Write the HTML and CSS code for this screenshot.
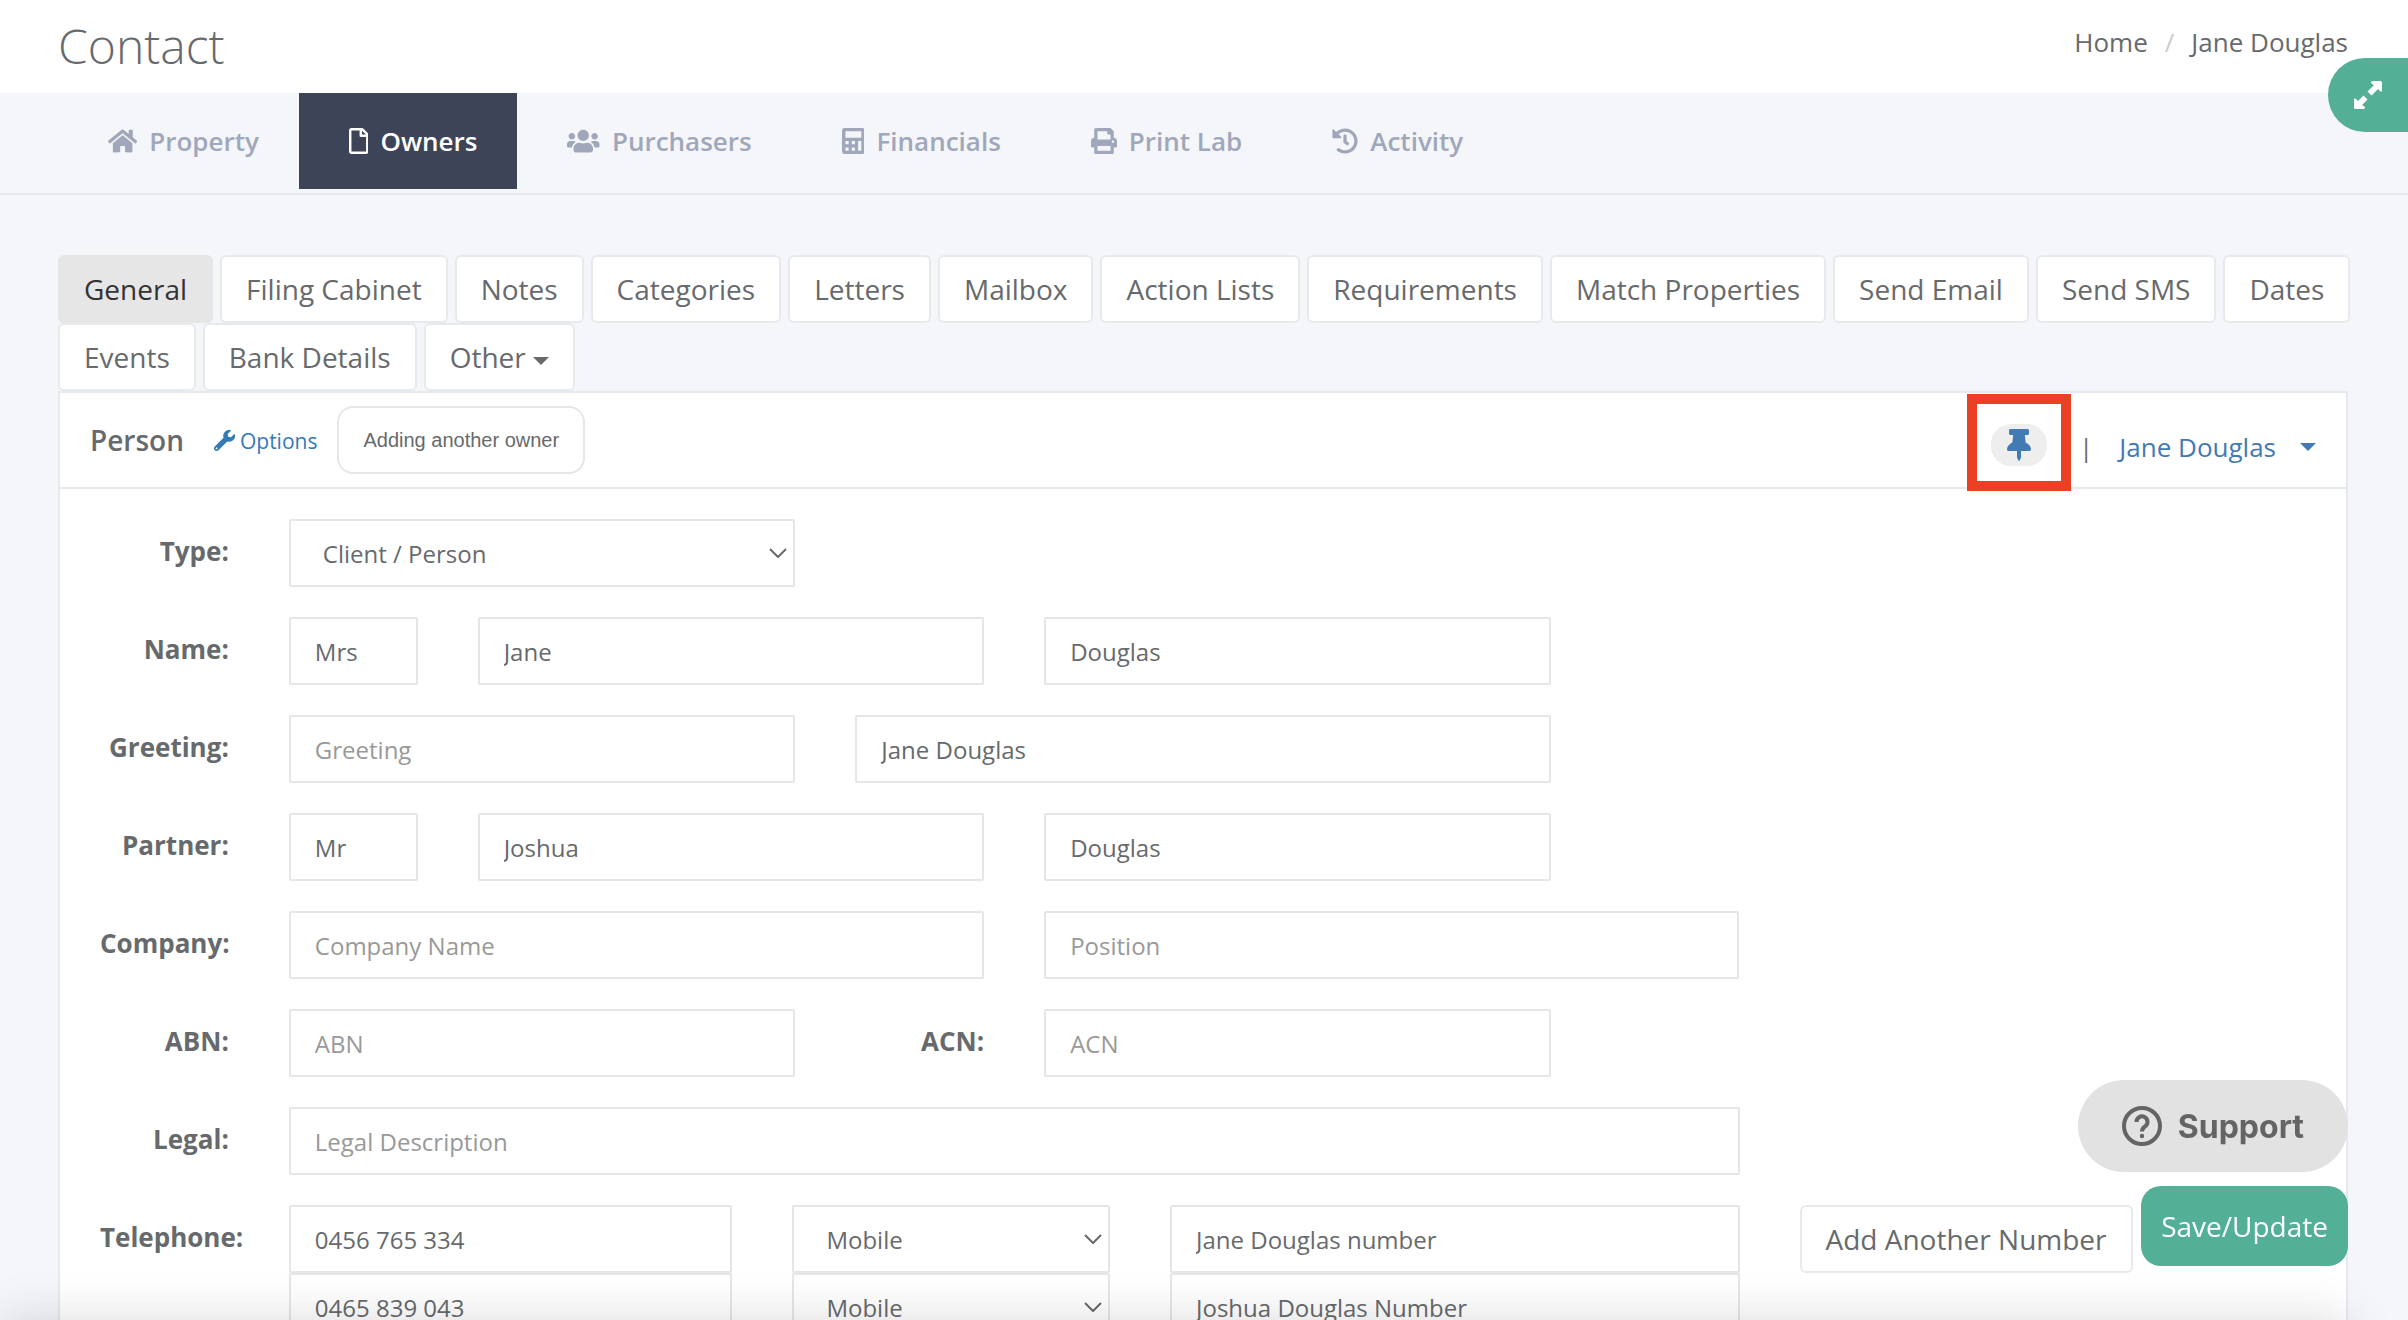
FILE: index.html
```html
<!DOCTYPE html>
<html lang="en">
<head>
    <meta charset="UTF-8">
    <meta name="viewport" content="width=device-width, initial-scale=1.0">
    <title>Contact - Jane Douglas</title>
    <link rel="stylesheet" href="styles.css">
</head>
<body>
    <header class="page-heading">
        <h1>Contact</h1>
        <nav class="breadcrumb">
            <a href="#">Home</a>
            <span class="divider">/</span>
            <a href="#">Jane Douglas</a>
        </nav>
    </header>

    <nav class="main-nav">
        <a href="#" class="nav-item">
            <svg class="icon" viewBox="0 0 576 512"><path d="M280.37 148.26L96 300.11V464a16 16 0 0 0 16 16l112.06-.29a16 16 0 0 0 15.92-16V368a16 16 0 0 1 16-16h64a16 16 0 0 1 16 16v95.64a16 16 0 0 0 16 16.05L464 480a16 16 0 0 0 16-16V300L295.67 148.26a12.19 12.19 0 0 0-15.3 0zM571.6 251.47L488 182.56V44.05a12 12 0 0 0-12-12h-56a12 12 0 0 0-12 12v72.61L318.47 43a48 48 0 0 0-61 0L4.34 251.47a12 12 0 0 0-1.6 16.9l25.5 31A12 12 0 0 0 45.15 301l235.22-193.74a12.19 12.19 0 0 1 15.3 0L530.9 301a12 12 0 0 0 16.9-1.6l25.5-31a12 12 0 0 0-1.7-16.93z"/></svg>
            Property
        </a>
        <a href="#" class="nav-item active">
            <svg class="icon" viewBox="0 0 384 512"><path d="M369.9 97.9L286 14C277 5 264.8 0 252.1 0H48C21.5 0 0 21.5 0 48v416c0 26.5 21.5 48 48 48h288c26.5 0 48-21.5 48-48V131.9c0-12.7-5.1-25-14.1-34zM332.1 128H256V51.9l76.1 76.1zM48 464V48h160v104c0 13.3 10.7 24 24 24h104v288H48z"/></svg>
            Owners
        </a>
        <a href="#" class="nav-item">
            <svg class="icon" viewBox="0 0 640 512"><path d="M96 224c35.3 0 64-28.7 64-64s-28.7-64-64-64-64 28.7-64 64 28.7 64 64 64zm448 0c35.3 0 64-28.7 64-64s-28.7-64-64-64-64 28.7-64 64 28.7 64 64 64zm32 32h-64c-17.6 0-33.5 7.1-45.1 18.6 40.3 22.1 68.9 62 75.1 109.4h66c17.7 0 32-14.3 32-32v-32c0-35.3-28.7-64-64-64zm-256 0c61.9 0 112-50.1 112-112S381.9 32 320 32 208 82.1 208 144s50.1 112 112 112zm76.8 32h-8.3c-20.8 10-43.9 16-68.5 16s-47.6-6-68.5-16h-8.3C179.6 288 128 339.6 128 403.2V432c0 26.5 21.5 48 48 48h288c26.5 0 48-21.5 48-48v-28.8c0-63.6-51.6-115.2-115.2-115.2zm-223.7-13.4C161.5 263.1 145.6 256 128 256H64c-35.3 0-64 28.7-64 64v32c0 17.7 14.3 32 32 32h65.9c6.3-47.4 34.9-87.3 75.2-109.4z"/></svg>
            Purchasers
        </a>
        <a href="#" class="nav-item">
            <svg class="icon" viewBox="0 0 448 512"><path fill-rule="evenodd" d="M48 0h352a48 48 0 0 1 48 48v416a48 48 0 0 1-48 48H48a48 48 0 0 1-48-48V48A48 48 0 0 1 48 0zM68 64v130h312V64zM68 258v62h62v-62zM193 258v62h62v-62zM68 386v62h62v-62zM193 386v62h62v-62zM318 258v190h62V258z"/></svg>
            Financials
        </a>
        <a href="#" class="nav-item">
            <svg class="icon" viewBox="0 0 512 512"><path d="M448 192V77.25c0-8.49-3.37-16.62-9.37-22.63L393.37 9.37c-6-6-14.14-9.37-22.63-9.37H96C78.33 0 64 14.33 64 32v160c-35.35 0-64 28.65-64 64v112c0 8.84 7.16 16 16 16h48v96c0 17.67 14.33 32 32 32h320c17.67 0 32-14.33 32-32v-96h48c8.84 0 16-7.16 16-16V256c0-35.35-28.65-64-64-64zm-64 256H128v-96h256v96zm0-224H128V64h192v48c0 8.84 7.16 16 16 16h48v96zm48 72c-13.25 0-24-10.75-24-24 0-13.26 10.75-24 24-24s24 10.74 24 24c0 13.25-10.75 24-24 24z"/></svg>
            Print Lab
        </a>
        <a href="#" class="nav-item">
            <svg class="icon" viewBox="0 0 512 512"><path d="M504 255.531c.253 136.64-111.18 248.372-247.82 248.468-59.015.042-113.223-20.53-155.822-54.911-11.077-8.94-11.905-25.541-1.839-35.607l11.267-11.267c8.609-8.609 22.353-9.551 31.891-1.984C173.062 425.135 212.781 440 256 440c101.705 0 184-82.311 184-184 0-101.705-82.311-184-184-184-48.814 0-93.149 18.969-126.068 49.932l50.754 50.754c10.08 10.08 2.941 27.314-11.313 27.314H24c-8.837 0-16-7.163-16-16V38.627c0-14.254 17.234-21.393 27.314-11.314l49.372 49.372C129.209 34.136 189.552 8 256 8c136.81 0 247.747 110.78 248 247.531zm-180.912 78.784l9.823-12.63c8.138-10.463 6.253-25.542-4.21-33.679L288 256.349V152c0-13.255-10.745-24-24-24h-16c-13.255 0-24 10.745-24 24v135.651l65.409 50.874c10.463 8.137 25.541 6.253 33.679-4.21z"/></svg>
            Activity
        </a>
    </nav>

    <main class="content">
        <div class="tabs">
            <button class="btn active">General</button>
            <button class="btn">Filing Cabinet</button>
            <button class="btn">Notes</button>
            <button class="btn">Categories</button>
            <button class="btn">Letters</button>
            <button class="btn">Mailbox</button>
            <button class="btn">Action Lists</button>
            <button class="btn">Requirements</button>
            <button class="btn">Match Properties</button>
            <button class="btn">Send Email</button>
            <button class="btn">Send SMS</button>
            <button class="btn">Dates</button>
            <button class="btn">Events</button>
            <button class="btn">Bank Details</button>
            <button class="btn">Other <span class="caret"></span></button>
        </div>

        <section class="panel">
            <div class="panel-header">
                <div class="panel-title">
                    <h2>Person</h2>
                    <a href="#" class="options">
                        <svg viewBox="0 0 512 512"><path d="M507.73 109.1c-2.24-9.03-13.54-12.09-20.12-5.51l-74.36 74.36-67.88-11.31-11.31-67.88 74.36-74.36c6.62-6.62 3.43-17.9-5.66-20.16-47.38-11.74-99.55.91-136.58 37.93-39.64 39.64-50.55 97.1-34.05 147.2L18.74 402.76c-24.99 24.99-24.99 65.51 0 90.5 24.99 24.99 65.51 24.99 90.5 0l213.21-213.21c50.12 16.71 107.47 5.68 147.37-34.22 37.07-37.07 49.7-89.32 37.91-136.73zM64 472c-13.25 0-24-10.75-24-24 0-13.26 10.75-24 24-24s24 10.74 24 24c0 13.25-10.75 24-24 24z"/></svg>
                        <span>Options</span>
                    </a>
                </div>
                <button class="help-btn">Adding another owner</button>
                <div class="panel-tools">
                    <div class="pin-highlight">
                        <button class="pin" aria-label="Pin">
                            <svg viewBox="0 0 384 512"><path d="M298.028 214.267L285.793 96H328c13.255 0 24-10.745 24-24V24c0-13.255-10.745-24-24-24H56C42.745 0 32 10.745 32 24v48c0 13.255 10.745 24 24 24h42.207L85.972 214.267C37.465 236.82 0 277.261 0 328c0 13.255 10.745 24 24 24h136v104.007c0 1.242.289 2.467.845 3.578l24 48c2.941 5.882 11.364 5.893 14.311 0l24-48a8.008 8.008 0 0 0 .845-3.578V352h136c13.255 0 24-10.745 24-24-.001-51.17-37.983-91.42-85.973-113.733z"/></svg>
                        </button>
                    </div>
                    <span class="bar">|</span>
                    <a href="#" class="person-menu">Jane Douglas <span class="caret"></span></a>
                </div>
            </div>

            <form class="form">
                <div class="row">
                    <label for="type">Type:</label>
                    <div class="col-3 select">
                        <select id="type"><option>Client / Person</option></select>
                        <svg viewBox="0 0 18 10"><path d="M1 1l8 8 8-8"/></svg>
                    </div>
                </div>
                <div class="row">
                    <label for="title">Name:</label>
                    <div class="col-1"><input type="text" id="title" value="Mrs"></div>
                    <div class="col-3"><input type="text" aria-label="First name" value="Jane"></div>
                    <div class="col-3"><input type="text" aria-label="Last name" value="Douglas"></div>
                </div>
                <div class="row">
                    <label for="greeting">Greeting:</label>
                    <div class="col-3"><input type="text" id="greeting" placeholder="Greeting"></div>
                    <div class="col-4"><input type="text" aria-label="Full name" value="Jane Douglas"></div>
                </div>
                <div class="row">
                    <label for="partner">Partner:</label>
                    <div class="col-1"><input type="text" id="partner" value="Mr"></div>
                    <div class="col-3"><input type="text" aria-label="Partner first name" value="Joshua"></div>
                    <div class="col-3"><input type="text" aria-label="Partner last name" value="Douglas"></div>
                </div>
                <div class="row">
                    <label for="company">Company:</label>
                    <div class="col-4"><input type="text" id="company" placeholder="Company Name"></div>
                    <div class="col-4"><input type="text" aria-label="Position" placeholder="Position"></div>
                </div>
                <div class="row">
                    <label for="abn">ABN:</label>
                    <div class="col-3"><input type="text" id="abn" placeholder="ABN"></div>
                    <label for="acn">ACN:</label>
                    <div class="col-3"><input type="text" id="acn" placeholder="ACN"></div>
                </div>
                <div class="row">
                    <label for="legal">Legal:</label>
                    <div class="col-8"><input type="text" id="legal" placeholder="Legal Description"></div>
                </div>
                <div class="row">
                    <label for="phone1">Telephone:</label>
                    <div class="phones">
                        <div class="phone-row">
                            <div class="col-4"><input type="text" id="phone1" value="0456 765 334"></div>
                            <div class="col-3 select">
                                <select aria-label="Phone type"><option>Mobile</option></select>
                                <svg viewBox="0 0 18 10"><path d="M1 1l8 8 8-8"/></svg>
                            </div>
                            <div class="col-5"><input type="text" aria-label="Phone comment" value="Jane Douglas number"></div>
                        </div>
                        <div class="phone-row">
                            <div class="col-4"><input type="text" aria-label="Phone" value="0465 839 043"></div>
                            <div class="col-3 select">
                                <select aria-label="Phone type"><option>Mobile</option></select>
                                <svg viewBox="0 0 18 10"><path d="M1 1l8 8 8-8"/></svg>
                            </div>
                            <div class="col-5"><input type="text" aria-label="Phone comment" value="Joshua Douglas Number"></div>
                        </div>
                    </div>
                    <div class="col-3"><button type="button" class="btn">Add Another Number</button></div>
                </div>
            </form>
        </section>
    </main>

    <button class="expand-btn" aria-label="Full screen">
        <svg viewBox="0 0 28 28"><path d="M17 1.500Q17 0 18.500 0H26.500Q28 0 28 1.500V9.500Q28 11 26.500 10.500L24 8 17.500 14.500 13.500 10.500 20 4 17.500 2.500zM11 26.500Q11 28 9.500 28H1.500Q0 28 0 26.500V18.500Q0 17 1.500 17.500L4 20 9.500 14.500 13.500 18.500 8 24 10.500 25.500z"/></svg>
    </button>

    <div class="bottom-shadow"></div>

    <div class="floating">
        <button class="support-btn">
            <svg viewBox="0 0 40 40"><circle cx="20" cy="20" r="18"/><path d="M14.500 16a5.500 5.500 0 1 1 8.500 4.500c-2 1.300-3 2.200-3 5"/><circle class="dot" cx="20" cy="30" r="2.200"/></svg>
            Support
        </button>
        <button class="save-btn">Save/Update</button>
    </div>
</body>
</html>
```
FILE: styles.css
```css
* {
    margin: 0;
    padding: 0;
    box-sizing: border-box;
}

body {
    height: 100vh;
    overflow-y: auto;
    scrollbar-width: none;
    background: #f4f6fa;
    color: #676a6c;
    font-family: 'Open Sans', sans-serif;
    font-size: 26px;
}

a {
    color: inherit;
    text-decoration: none;
}

button,
input,
select {
    font-family: inherit;
    color: inherit;
}

button {
    cursor: pointer;
}

svg {
    fill: currentColor;
    flex: none;
}

.page-heading {
    display: flex;
    justify-content: space-between;
    height: 93px;
    padding: 0 60px 0 58px;
    background: #ffffff;
}

h1 {
    font-size: 48px;
    font-weight: 300;
    line-height: 92px;
}

.breadcrumb {
    display: flex;
    gap: 17px;
    line-height: 84px;
}

.breadcrumb .divider {
    color: #cccccc;
}

.main-nav {
    display: flex;
    align-items: flex-start;
    height: 102px;
    padding-left: 58px;
    border-bottom: 2px solid #e7eaec;
}

.nav-item {
    display: flex;
    align-items: center;
    gap: 12px;
    height: 96px;
    padding: 0 40px 0 50px;
    color: #a0a7ba;
    font-weight: 600;
}

.nav-item.active {
    background: #3d4457;
    color: #ffffff;
}

.icon {
    height: 26px;
}

.content {
    padding: 60px 60px 0 58px;
}

.tabs {
    display: flex;
    flex-wrap: wrap;
    column-gap: 7px;
    margin-right: -6px;
}

.btn {
    height: 68px;
    padding: 0 24px;
    border: 2px solid #e7eaec;
    border-radius: 6px;
    background: #ffffff;
    font-size: 28px;
    white-space: nowrap;
}

.btn.active {
    background: #e6e6e6;
    border-color: #e6e6e6;
    color: #333333;
}

.caret {
    display: inline-block;
    border: 8px solid transparent;
    border-top-color: currentColor;
    border-bottom: 0;
    vertical-align: middle;
}

.panel {
    background: #ffffff;
    border: 2px solid #e7eaec;
}

.panel-header {
    display: flex;
    align-items: center;
    height: 96px;
    padding: 0 30px;
    border-bottom: 2px solid #e7eaec;
}

.panel-title {
    display: flex;
    align-items: baseline;
    gap: 30px;
    margin-right: 20px;
}

h2 {
    font-size: 28px;
    font-weight: 600;
}

.options {
    display: flex;
    align-items: center;
    gap: 5px;
    color: #337ab7;
    font-size: 21px;
}

.options svg {
    width: 21px;
}

.help-btn {
    height: 68px;
    padding: 0 24px;
    border: 2px solid #e7e7e7;
    border-radius: 16px;
    background: #ffffff;
    font-family: 'Liberation Sans', Arial, sans-serif;
    font-size: 20px;
}

.panel-tools {
    display: flex;
    align-items: center;
    align-self: flex-start;
    height: 108px;
    margin-left: auto;
}

.pin-highlight {
    align-self: flex-start;
    border: 10px solid #ec4024;
    padding: 20px 14px 15px;
    margin: 1px 8px 0 0;
}

.pin {
    display: flex;
    align-items: center;
    justify-content: center;
    width: 56px;
    height: 42px;
    border: 0;
    border-radius: 20px;
    background: #eeeeee;
    color: #427ab3;
}

.pin svg {
    height: 32px;
}

.bar {
    margin-right: 26px;
}

.person-menu {
    display: flex;
    align-items: center;
    gap: 24px;
    color: #427ab3;
}

.form {
    display: flex;
    flex-direction: column;
    gap: 30px;
    padding: 30px 10px;
}

.row {
    display: grid;
    grid-template-columns: repeat(12, 1fr);
}

.row > *,
.phone-row > * {
    min-width: 0;
    padding: 0 30px;
}

label {
    font-weight: 700;
    line-height: 64px;
    text-align: right;
    white-space: nowrap;
}

.col-3 { grid-column: span 3; }
.col-4 { grid-column: span 4; }
.col-5 { grid-column: span 5; }
.col-8 { grid-column: span 8; }

input,
select {
    display: block;
    width: 100%;
    height: 68px;
    padding: 0 24px;
    border: 2px solid #e5e6e7;
    border-radius: 2px;
    background: #ffffff;
    font-size: 24px;
}

input::placeholder {
    color: #999999;
}

.select {
    position: relative;
}

select {
    appearance: none;
    padding-left: 32px;
}

.select svg {
    position: absolute;
    top: 29px;
    right: 38px;
    width: 18px;
    fill: none;
    stroke: currentColor;
    stroke-width: 2;
    pointer-events: none;
}

.row > .phones {
    grid-column: span 8;
    padding: 0;
}

.phone-row {
    display: grid;
    grid-template-columns: repeat(12, 1fr);
}

.expand-btn {
    position: fixed;
    top: 58px;
    right: 0;
    width: 80px;
    height: 74px;
    padding-left: 26px;
    border: 0;
    border-radius: 37px 0 0 37px;
    background: #53af96;
    color: #ffffff;
}

.expand-btn svg {
    display: block;
    width: 28px;
}

.bottom-shadow {
    position: fixed;
    top: 100%;
    left: 0;
    right: 60px;
    height: 60px;
    box-shadow: 0 0 50px rgba(0, 0, 0, 0.15);
}

.floating {
    position: fixed;
    right: 60px;
    bottom: 54px;
    display: flex;
    flex-direction: column;
    align-items: flex-end;
    gap: 14px;
}

.support-btn {
    display: flex;
    align-items: center;
    gap: 16px;
    height: 92px;
    padding: 0 44px;
    border: 0;
    border-radius: 46px;
    background: #e2e2e2;
    color: #646464;
    font-family: Inter, sans-serif;
    font-size: 32px;
    font-weight: 700;
}

.support-btn svg {
    width: 40px;
    fill: none;
    stroke: currentColor;
    stroke-width: 4;
}

.support-btn .dot {
    fill: currentColor;
    stroke: none;
}

.save-btn {
    height: 80px;
    padding: 0 20px;
    border: 0;
    border-radius: 20px;
    background: #53af96;
    color: #ffffff;
    font-size: 28px;
}
```
